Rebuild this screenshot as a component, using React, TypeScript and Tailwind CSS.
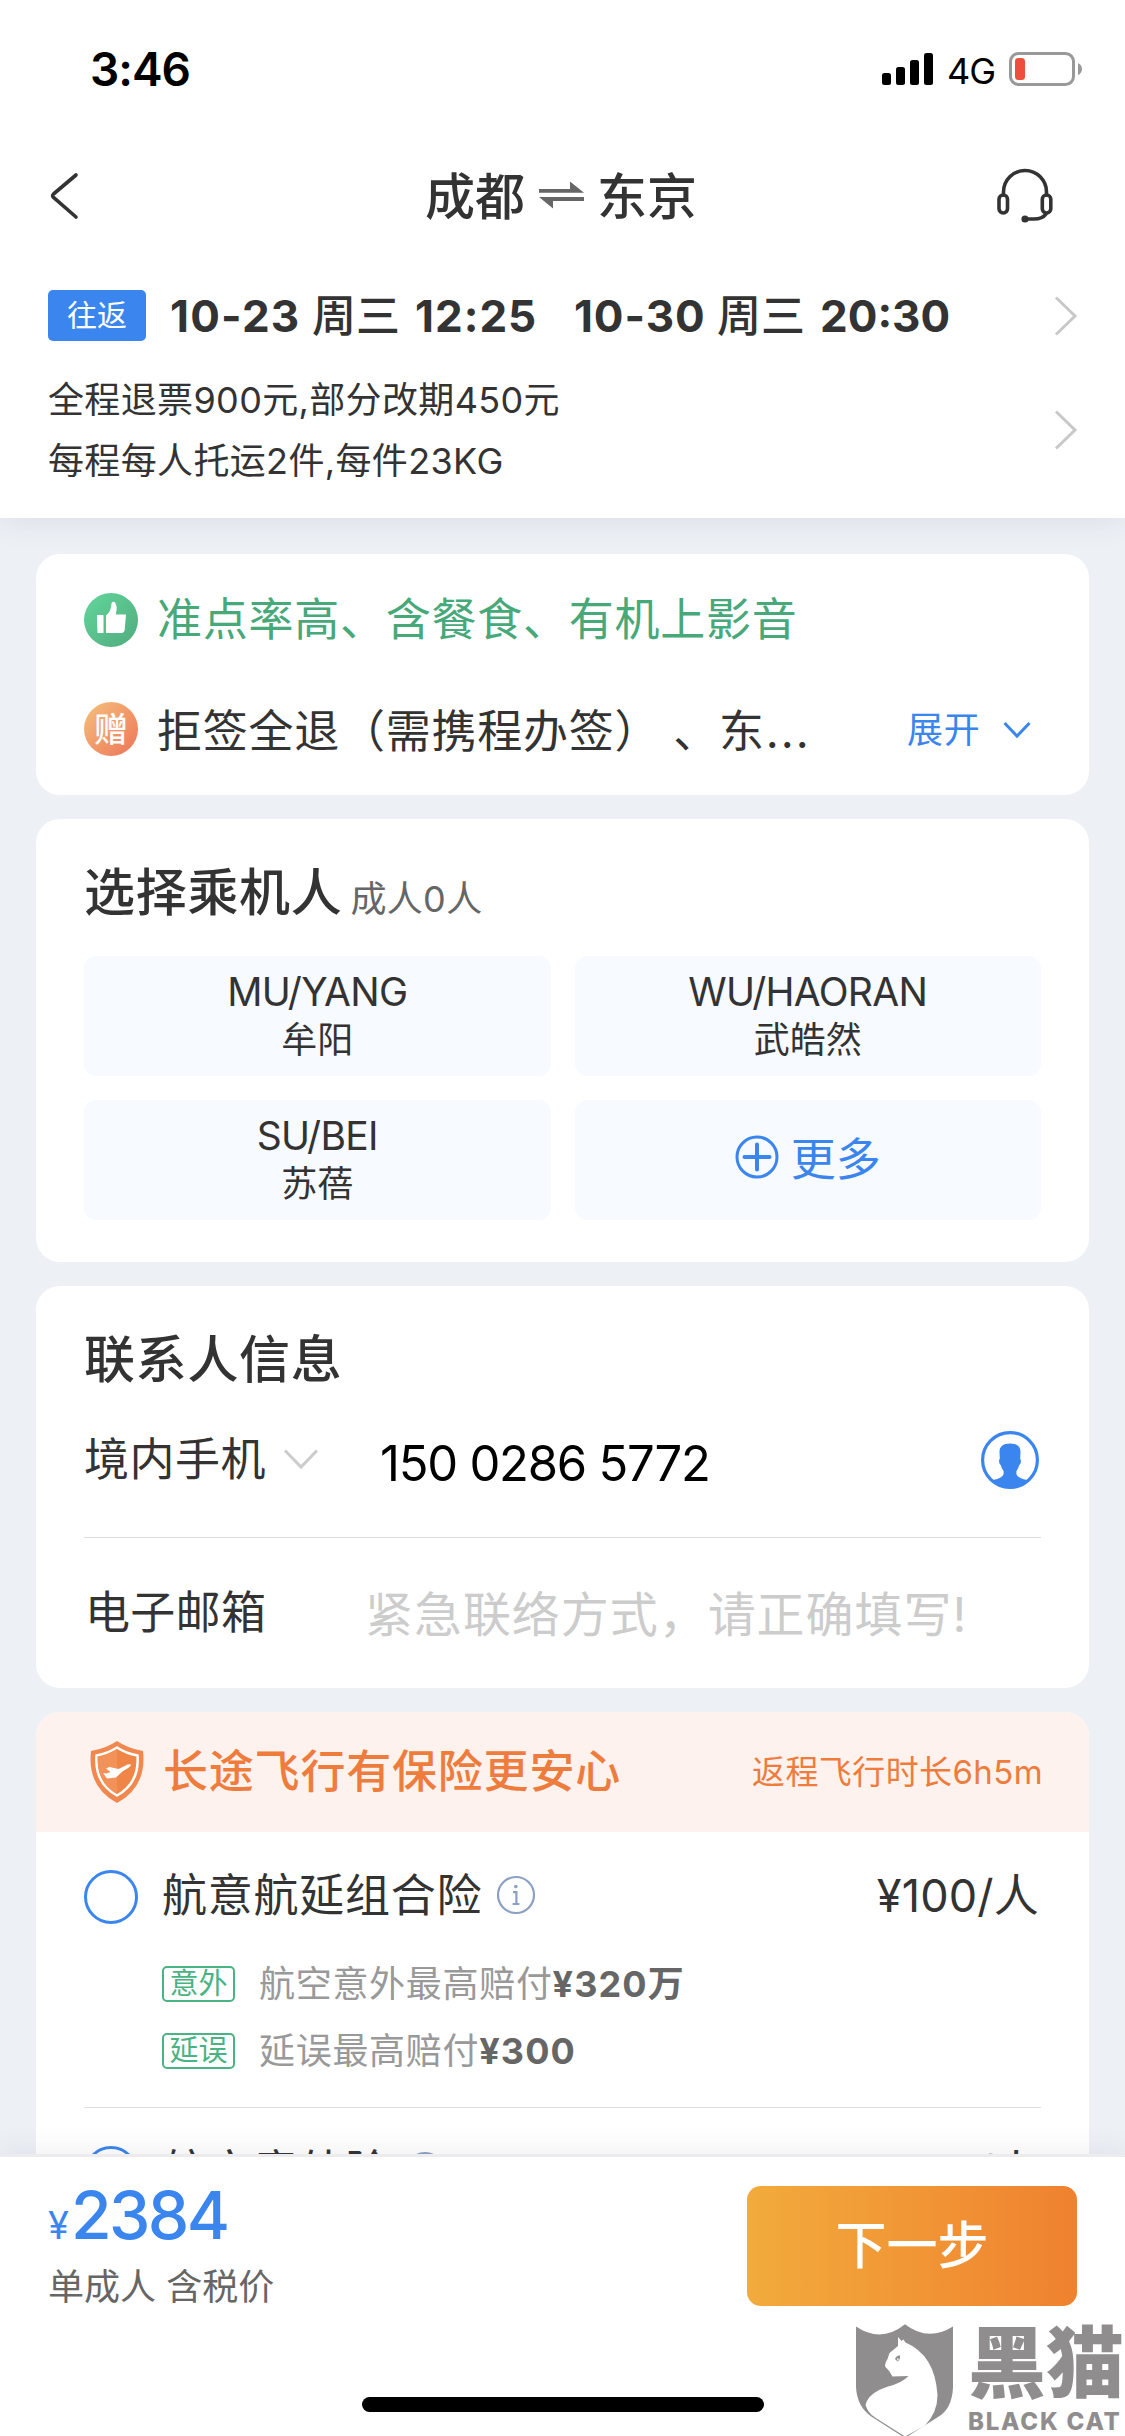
import React from "react";

function ChevronRight() {
  return (
    <svg className="h-[40px] w-[24px] shrink-0" viewBox="0 0 24 40" fill="none" stroke="#c8c8c8" strokeWidth="3">
      <path d="M2 1.5 21 20 2 38.5" />
    </svg>
  );
}

function InfoIcon() {
  return (
    <svg className="mt-[-3px] h-[40px] w-[40px] shrink-0" viewBox="0 0 40 40" fill="none" stroke="#8ba0c4" strokeWidth="2.2">
      <circle cx="20" cy="20" r="18" />
      <circle cx="19.8" cy="11.6" r="1.8" fill="#8ba0c4" stroke="none" />
      <path d="M17 17.2h3.4v11.6M16.6 29h6.8" />
    </svg>
  );
}

function StatusBar() {
  return (
    <div className="flex h-[138px] items-center">
      <span className="ml-[90px] w-[792px] text-[46px] font-semibold leading-none tracking-[-1px] text-black">3:46</span>
      <svg className="h-[34px] w-[52px]" viewBox="0 0 52 34" fill="#000">
        <rect x="0" y="21" width="9" height="12" rx="2.5" />
        <rect x="14" y="15" width="9" height="18" rx="2.5" />
        <rect x="28" y="8" width="9" height="25" rx="2.5" />
        <rect x="42" y="1" width="9" height="32" rx="2.5" />
      </svg>
      <span className="ml-[13px] w-[60px] pt-[3px] text-[36px] leading-none tracking-[-1px] text-black">4G</span>
      <svg className="ml-[2px] h-[34px] w-[74px]" viewBox="0 0 74 34">
        <rect x="1.5" y="1.5" width="63" height="31" rx="8" fill="none" stroke="#999" strokeWidth="3" />
        <rect x="6" y="6" width="10" height="22" rx="3.5" fill="#ee4f3c" />
        <path d="M69 11q4 2 4 6t-4 6z" fill="#999" />
      </svg>
    </div>
  );
}

function NavBar() {
  return (
    <div className="flex h-[116px] items-center text-[#333]">
      <svg className="ml-[48px] h-[48px] w-[34px]" viewBox="0 0 34 48" fill="none" stroke="#333" strokeWidth="3.6" strokeLinecap="round" strokeLinejoin="round">
        <path d="M28 3 5.5 22q-1.8 1.6 0 3.4L28 45" />
      </svg>
      <div className="ml-[343px] flex w-[570px] items-center pt-[2px] text-[50px] font-medium leading-none">
        <span className="w-[114px]">成都</span>
        <svg className="mt-[-5px] mr-[12px] h-[30px] w-[46px]" viewBox="0 0 46 30" fill="#666">
          <path d="M0 9h31V1.5L45 12.8H0zM45 17H0l14 11.5V21h31z" />
        </svg>
        <span>东京</span>
      </div>
      <svg className="h-[58px] w-[60px]" viewBox="0 0 60 58" fill="none" stroke="#333" strokeWidth="3.6" strokeLinecap="round">
        <path d="M8.500 28V25a21.500 21.500 0 0 1 43 0v3" />
        <rect x="4" y="28" width="8.500" height="18" rx="4.200" />
        <rect x="47.300" y="28" width="8.500" height="18" rx="4.200" />
        <path d="M51 47q-3.500 5-12 5h-8" />
        <circle cx="30" cy="52" r="1.800" fill="#333" />
      </svg>
    </div>
  );
}

function TripHeader() {
  return (
    <header className="relative z-10 h-[518px] shrink-0 bg-white shadow-[0_4px_28px_rgba(60,60,80,0.09)]">
      <StatusBar />
      <NavBar />
      <div className="flex h-[115px] items-center pl-[48px] pt-[8px] text-[#333]">
        <span className="flex h-[51px] w-[98px] items-center justify-center rounded-[5px] bg-[#3a85ee] text-[30px] text-white">往返</span>
        <div className="ml-[24px] flex w-[884px] whitespace-nowrap text-[44px] font-bold leading-none">
          <span className="w-[142px] tracking-[1.200px]">10-23</span>
          <span className="w-[103px] font-medium">周三</span>
          <span className="w-[159px] tracking-[1px]">12:25</span>
          <span className="w-[143px] tracking-[0.900px]">10-30</span>
          <span className="w-[103px] font-medium">周三</span>
          <span>20:30</span>
        </div>
        <ChevronRight />
      </div>
      <div className="flex h-[122px] items-center pl-[48px] text-[36px] leading-[61px] tracking-[0.350px] text-[#333]">
        <div className="w-[1006px] whitespace-nowrap pt-[2px]">
          <p>全程退票900元,部分改期450元</p>
          <p>每程每人托运2件,每件23KG</p>
        </div>
        <ChevronRight />
      </div>
    </header>
  );
}

function PerksCard() {
  return (
    <section className="h-[241px] shrink-0 rounded-[24px] bg-white pl-[48px] pt-[11px] text-[45px] tracking-[0.750px]">
      <div className="flex h-[110px] items-center">
        <svg className="h-[54px] w-[54px]" viewBox="0 0 54 54">
          <defs>
            <linearGradient id="perk" x1="0" y1="0" x2="1" y2="1">
              <stop offset="0" stopColor="#63d69b" />
              <stop offset="1" stopColor="#50ab7e" />
            </linearGradient>
          </defs>
          <circle cx="27" cy="27" r="27" fill="url(#perk)" />
          <path d="M13 22h6.500v18h-6q-.5-9-.5-18zM22 40V22.500q5-3.500 5.500-12 .6-2.500 3-1.500 3.500 3 1.300 12.500h10.200l-1.300 15.500q-.5 3-3.500 3z" fill="#fff" />
        </svg>
        <span className="ml-[19px] text-[#47a87a]">准点率高、含餐食、有机上影音</span>
      </div>
      <div className="flex h-[110px] items-center">
        <span className="mt-[-2px] flex h-[54px] w-[54px] items-center justify-center rounded-full bg-gradient-to-br from-[#f4c07c] to-[#ec7358] text-[34px] font-medium tracking-normal text-white">赠</span>
        <div className="ml-[19px] flex w-[750px] whitespace-nowrap pt-[4px] text-[#333]">
          <span>拒签全退（需携程办签）</span>
          <span className="ml-[13px] mr-[1px]">、东</span>
          <span className="tracking-[2px]">...</span>
        </div>
        <span className="w-[95px] text-[36px] text-[#3a85ee]">展开</span>
        <svg className="h-[20px] w-[30px]" viewBox="0 0 30 20" fill="none" stroke="#3a85ee" strokeWidth="3">
          <path d="M2.500 3 15 16 27.500 3" />
        </svg>
      </div>
    </section>
  );
}

function Tile({ latin, name }: { latin: string; name: string }) {
  return (
    <button className="flex h-[120px] flex-col items-center justify-center rounded-[12px] bg-[#f7faff] text-[#333]">
      <span className="text-[39px] leading-[49px] tracking-[-0.700px]">{latin}</span>
      <span className="text-[36px] leading-[49px]">{name}</span>
    </button>
  );
}

function PassengerCard() {
  return (
    <section className="h-[443px] shrink-0 rounded-[24px] bg-white px-[48px]">
      <div className="flex h-[137px] items-center pt-[11px] text-[#333]">
        <h2 className="text-[51px] font-medium tracking-[0.700px]">选择乘机人</h2>
        <span className="ml-[8px] pt-[12px] text-[36px] tracking-[0.300px] text-[#666]">成人0人</span>
      </div>
      <div className="grid grid-cols-2 gap-[24px]">
        <Tile latin="MU/YANG" name="牟阳" />
        <Tile latin="WU/HAORAN" name="武皓然" />
        <Tile latin="SU/BEI" name="苏蓓" />
        <button className="flex h-[120px] items-center justify-center gap-[12px] rounded-[12px] bg-[#f7faff] text-[45px] text-[#3a85ee]">
          <svg className="mt-[-6px] h-[44px] w-[44px]" viewBox="0 0 44 44" fill="none" stroke="#3a85ee" strokeWidth="3" strokeLinecap="round">
            <circle cx="22" cy="22" r="20" />
            <path d="M22 9.500v25M9.500 22h25" strokeWidth="4" />
          </svg>
          更多
        </button>
      </div>
    </section>
  );
}

function ContactCard() {
  return (
    <section className="h-[402px] shrink-0 rounded-[24px] bg-white px-[48px] pt-[38px] text-[45px] text-[#333]">
      <h2 className="h-[72px] text-[51px] font-medium leading-[72px] tracking-[0.700px]">联系人信息</h2>
      <div className="flex h-[142px] items-center border-b border-[#dedede] pb-[13px]">
        <span className="w-[199px] tracking-[0.500px]">境内手机</span>
        <svg className="mt-[-3px] h-[22px] w-[36px]" viewBox="0 0 36 22" fill="none" stroke="#ccc" strokeWidth="3">
          <path d="M2 2.500 18 19 34 2.500" />
        </svg>
        <span className="ml-[61px] w-[600px] pt-[7px] text-[49px] leading-none tracking-[-1.250px] text-black">150 0286 5772</span>
        <svg className="h-[60px] w-[60px] shrink-0" viewBox="0 0 60 60">
          <circle cx="30" cy="30" r="27.400" fill="none" stroke="#3a85ee" strokeWidth="3.200" />
          <path d="M30 13.500c7 0 10.500 3 10.500 8.500l-.3 7c1.300.5.800 5-1 6-.8 3-1.700 4.500-2.800 6v3q1 4 10.600 6Q40 58.500 30 58.500T13 50q9.600-2 10.600-6v-3c-1.200-1.500-2-3-2.800-6-1.800-1-2.300-5.500-1-6l-.3-7c0-5.500 3.500-8.500 10.500-8.500z" fill="#3a85ee" />
        </svg>
      </div>
      <div className="flex h-[150px] items-center">
        <span className="w-[281px] pl-[1px] tracking-[0.300px]">电子邮箱</span>
        <span className="whitespace-nowrap pt-[4px] text-[48px] tracking-[0.950px] text-[#ccc]">紧急联络方式，请正确填写!</span>
      </div>
    </section>
  );
}

function InsuranceRow({ title, price }: { title: string; price: string }) {
  return (
    <div className="flex h-[118px] items-center pt-[10px]">
      <span className="mt-[2px] h-[54px] w-[54px] shrink-0 rounded-full border-[3px] border-[#3a85ee]" />
      <span className="ml-[24px] mr-[14px] tracking-[0.750px]">{title}</span>
      <InfoIcon />
      <span className="ml-auto mr-[2px] tracking-[0.200px]">{price}</span>
    </div>
  );
}

function Benefit({ tag, text, amount }: { tag: string; text: string; amount: string }) {
  return (
    <div className="flex h-[67px] items-center pl-[78px]">
      <span className="flex h-[36px] w-[73px] items-center justify-center rounded-[5px] border-2 border-[#4bb383] text-[29px] leading-none text-[#4bb383]">{tag}</span>
      <span className="ml-[24px] text-[36px] tracking-[0.700px] text-[#999]">{text}</span>
      <span className="text-[36px] font-bold tracking-[1.100px] text-[#666]">{amount}</span>
    </div>
  );
}

function InsuranceCard() {
  return (
    <section className="h-[560px] shrink-0 overflow-hidden rounded-t-[24px] bg-white text-[45px] text-[#333]">
      <div className="flex h-[120px] items-center bg-[#fdf2ed] pl-[54px] pr-[46px] text-[#ee7c3d]">
        <svg className="h-[62px] w-[54px]" viewBox="0 0 54 62">
          <path d="M27 0q11 7.500 26 10 4 36-26 52Q-3 46 1 10 16 7.500 27 0z" fill="#f0884f" />
          <path d="M27 6.500q9 6 20.500 8 2 27.500-20.500 40Q4.500 42 6.500 14.500 18 12.500 27 6.500z" fill="#ef8546" stroke="#fff" strokeWidth="2.500" />
          <path d="M27 8Q18 13.500 8 15.500 6 41 27 53z" fill="#f29258" />
          <path d="M13 32l3.500.5 4-1.500-4.500-3.500 3.500-1.500 9 2 9-4.500q4-.8 3.500.8-1 2-8 5.700L26 36.500l-9 1z" fill="#fff" />
        </svg>
        <span className="ml-[19px] font-medium tracking-[0.800px]">长途飞行有保险更安心</span>
        <span className="ml-auto pt-[2px] text-[33px] tracking-[0.400px]">返程飞行时长6h5m</span>
      </div>
      <div className="px-[48px]">
        <div className="h-[276px] border-b border-[#dedede]">
          <InsuranceRow title="航意航延组合险" price="¥100/人" />
          <Benefit tag="意外" text="航空意外最高赔付" amount="¥320万" />
          <Benefit tag="延误" text="延误最高赔付" amount="¥300" />
        </div>
        <InsuranceRow title="航空意外险" price="¥30/人" />
      </div>
    </section>
  );
}

function BlackCatMark() {
  return (
    <div className="absolute right-0 top-[164px] flex h-[118px] w-[270px] text-[#8f8d8e]">
      <svg className="h-[118px] w-[100px] shrink-0" viewBox="0 0 100 118">
        <path d="M1 5.500q25 17 49-2.300 23 18 48 2.300v61Q97 88 83 96L50 117 17 96Q2 86 1 66z" fill="#8f8d8e" />
        <path d="M43 16l3.500 4 2-1.500 2 3Q80 34 82.500 74q0 18-13 31L50 115.500 20 96.500Q13 92 10.500 84 13 72 33 65.500 47 62 53.500 55L37.500 55.500q-3-6-7-9.500-1.500-3 2-8l2-6 8.500-7z" fill="#fff" />
        <path d="M40 38q1.500-4 5-3.500.5 4-2.500 6z" fill="#8f8d8e" />
        <path d="M42 37l2 1-1.500 2z" fill="#fff" />
      </svg>
      <div className="ml-[13px] flex flex-col">
        <span className="mt-[9px] h-[68px] whitespace-nowrap text-[78px] font-black leading-[68px]">黑猫</span>
        <span className="mt-[12px] whitespace-nowrap text-[24px] font-extrabold leading-[24px] tracking-[1.800px]">BLACK CAT</span>
      </div>
    </div>
  );
}

function Footer() {
  return (
    <footer className="relative z-10 h-[282px] shrink-0 border-t-[3px] border-[#ececee] bg-white shadow-[0_-4px_26px_rgba(60,60,80,0.08)]">
      <div className="flex justify-between pl-[48px] pr-[48px] pt-[29px]">
        <div>
          <div className="flex h-[58px] items-baseline leading-[58px] text-[#3a85ee]">
            <span className="w-[23px] text-[38px] tracking-[-1px]">¥</span>
            <span className="text-[66px] font-medium tracking-[-2.600px]">2384</span>
          </div>
          <p className="h-[86px] text-[36px] leading-[86px] text-[#666]">单成人 含税价</p>
        </div>
        <button className="h-[120px] w-[330px] rounded-[14px] bg-gradient-to-r from-[#f2ab3c] to-[#ef812f] text-[51px] font-medium leading-[118px] text-white">下一步</button>
      </div>
      <div className="absolute left-[362px] top-[240px] h-[15px] w-[402px] rounded-full bg-black" />
      <BlackCatMark />
    </footer>
  );
}

export default function App() {
  return (
    <div lang="zh-CN" className="flex h-[2436px] w-[1125px] flex-col overflow-hidden bg-[#edf0f5] font-['Inter','Noto_Sans_CJK_SC',sans-serif]">
      <TripHeader />
      <main className="flex h-[1636px] shrink-0 flex-col gap-[24px] overflow-hidden px-[36px] pt-[36px]">
        <PerksCard />
        <PassengerCard />
        <ContactCard />
        <InsuranceCard />
      </main>
      <Footer />
    </div>
  );
}
